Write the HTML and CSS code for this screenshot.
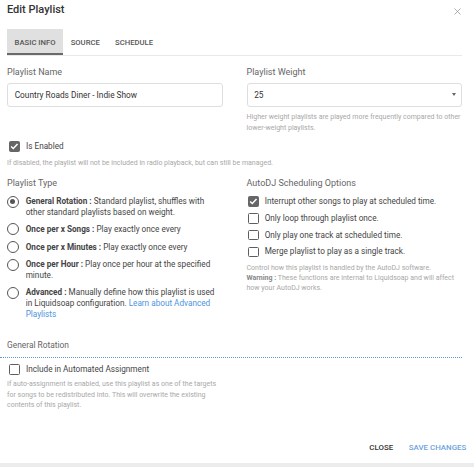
FILE: index.html
```html
<!DOCTYPE html>
<html>
<head>
<meta charset="utf-8">
<link rel="stylesheet" href="styles.css">
</head>
<body>
<div class="dialog">
  <div class="header">
    <div class="title">Edit Playlist</div>
    <svg class="close" width="7" height="7" viewBox="0 0 7 7"><path d="M0.5 0.5L6.5 6.5M6.5 0.5L0.5 6.5" stroke="#999" stroke-width="0.8" fill="none"/></svg>
  </div>
  <div class="tabs">
    <div class="tab active">BASIC INFO</div>
    <div class="tab">SOURCE</div>
    <div class="tab">SCHEDULE</div>
  </div>

  <div class="grid2 row1">
    <div>
      <div class="field-label">Playlist Name</div>
      <div class="input">Country Roads Diner - Indie Show</div>
    </div>
    <div>
      <div class="field-label">Playlist Weight</div>
      <div class="input select"><span>25</span><span class="caret"></span></div>
      <div class="help help-weight">Higher weight playlists are played more frequently compared to other lower-weight playlists.</div>
    </div>
  </div>

  <div class="check-row enabled-row">
    <span class="cb checked"><svg viewBox="0 0 10 10"><path d="M2 5.2L4.1 7.2L8.1 2.9" stroke="#fff" stroke-width="1.4" fill="none"/></svg></span>
    <span class="cb-label">Is Enabled</span>
  </div>
  <div class="help help-enabled">If disabled, the playlist will not be included in radio playback, but can still be managed.</div>

  <div class="grid2 row3">
    <div>
      <div class="field-label">Playlist Type</div>
      <div class="radio-list">
        <div class="radio-item"><span class="radio selected"></span><span class="radio-text"><b>General Rotation :</b> Standard playlist, shuffles with other standard playlists based on weight.</span></div>
        <div class="radio-item"><span class="radio"></span><span class="radio-text"><b>Once per x Songs :</b> Play exactly once every</span></div>
        <div class="radio-item"><span class="radio"></span><span class="radio-text"><b>Once per x Minutes :</b> Play exactly once every</span></div>
        <div class="radio-item"><span class="radio"></span><span class="radio-text"><b>Once per Hour :</b> Play once per hour at the specified minute.</span></div>
        <div class="radio-item"><span class="radio"></span><span class="radio-text"><b>Advanced :</b> Manually define how this playlist is used in Liquidsoap configuration. <span class="link">Learn about Advanced Playlists</span></span></div>
      </div>
    </div>
    <div>
      <div class="field-label">AutoDJ Scheduling Options</div>
      <div class="check-list">
        <div class="check-item"><span class="cb checked"><svg viewBox="0 0 10 10"><path d="M2 5.2L4.1 7.2L8.1 2.9" stroke="#fff" stroke-width="1.4" fill="none"/></svg></span><span class="cb-label">Interrupt other songs to play at scheduled time.</span></div>
        <div class="check-item"><span class="cb"></span><span class="cb-label">Only loop through playlist once.</span></div>
        <div class="check-item"><span class="cb"></span><span class="cb-label">Only play one track at scheduled time.</span></div>
        <div class="check-item"><span class="cb"></span><span class="cb-label">Merge playlist to play as a single track.</span></div>
      </div>
      <div class="help help-autodj">Control how this playlist is handled by the AutoDJ software.<br><b>Warning :</b> These functions are internal to Liquidsoap and will affect how your AutoDJ works.</div>
    </div>
  </div>

  <div class="section-title">General Rotation</div>
  <div class="check-row include-row">
    <span class="cb"></span>
    <span class="cb-label">Include in Automated Assignment</span>
  </div>
  <div class="grid2">
    <div class="help help-include">If auto-assignment is enabled, use this playlist as one of the targets for songs to be redistributed into. This will overwrite the existing contents of this playlist.</div>
  </div>

  <div class="footer">
    <span class="btn btn-close">CLOSE</span>
    <span class="btn btn-save">SAVE CHANGES</span>
  </div>
</div>
</body>
</html>
```
FILE: styles.css
```css
* { box-sizing: border-box; }
html, body { margin: 0; padding: 0; }
body {
  background: #ececec;
  font-family: Roboto, "Noto Sans", sans-serif;
  color: #444;
}
.dialog {
  background: #fff;
  height: 463px;
  display: flex;
  flex-direction: column;
  padding: 0 12px 0 7px;
}
.header {
  height: 20px;
  display: flex;
  justify-content: space-between;
  align-items: center;
}
.title {
  font-size: 11px;
  line-height: 14px;
  font-weight: 500;
  color: #333;
}
.close { margin-top: 3px; margin-right: 1px; }
.tabs {
  display: flex;
  margin-top: 9px;
  border-bottom: 1px solid #e9e9e9;
}
.tab {
  height: 26px;
  padding: 0 7.6px;
  font-size: 7.7px;
  font-weight: 500;
  color: #555;
  display: flex;
  align-items: center;
}
.tab.active {
  background: #e0e0e0;
  border-bottom: 2px solid #6a6a6a;
  padding-top: 2px;
}
.grid2 {
  display: grid;
  grid-template-columns: 1fr 1fr;
  column-gap: 24px;
}
.row1 { margin-top: 10.5px; }
.field-label {
  font-size: 9px;
  line-height: 11px;
  color: #666;
}
.row1 .field-label { margin-bottom: 5.8px; }
.input {
  height: 23.4px;
  border: 1px solid #dedede;
  border-radius: 3px;
  padding: 0 6.7px;
  font-size: 8.3px;
  color: #333;
  display: flex;
  align-items: center;
}
.select { justify-content: space-between; padding-right: 5px; }
.caret {
  width: 0; height: 0;
  border-left: 2.5px solid transparent;
  border-right: 2.5px solid transparent;
  border-top: 3px solid #666;
}
.help {
  font-size: 7px;
  color: #a8a8a8;
}
.help b { color: #888; font-weight: 700; }
.help-weight { margin-top: 5.3px; line-height: 11.3px; }
.check-row {
  display: flex;
  align-items: center;
  height: 14px;
}
.enabled-row { margin-top: 5px; }
.cb {
  width: 10.5px;
  height: 10.5px;
  border: 1.4px solid #5e5e5e;
  border-radius: 1.5px;
  flex: none;
  margin-left: 2px;
  margin-right: 6.5px;
  display: inline-block;
}
.cb.checked {
  background: #666;
  border-color: #666;
  position: relative;
}
.cb.checked svg {
  position: absolute;
  left: -1.4px; top: -1.4px;
  width: 10.5px; height: 10.5px;
}
.cb-label {
  font-size: 8.2px;
  line-height: 10.7px;
  color: #444;
}
.help-enabled { margin-top: 4.5px; line-height: 10.3px; }
.row3 { margin-top: 9.5px; }
.radio-list, .check-list {
  display: flex;
  flex-direction: column;
  margin-top: 7.5px;
}
.radio-list { gap: 6.3px; }
.check-list { gap: 6px; }
.radio-item { display: flex; align-items: flex-start; }
.radio {
  width: 12px;
  height: 12px;
  border: 1.4px solid #555;
  border-radius: 50%;
  flex: none;
  margin-top: -0.6px;
  margin-right: 6.7px;
  position: relative;
}
.radio.selected::after {
  content: "";
  position: absolute;
  left: 1.9px; top: 1.9px;
  width: 5.4px; height: 5.4px;
  border-radius: 50%;
  background: #555;
}
.radio-text {
  font-size: 8.2px;
  line-height: 10.7px;
  color: #444;
}
.radio-text b { font-weight: 700; color: #444; }
.link { color: #4d94e0; }
.check-item { display: flex; align-items: center; }
.check-item .cb { margin-left: 1.7px; margin-right: 6px; }
.help-autodj { margin-top: 6.8px; line-height: 9.8px; }
.section-title {
  margin-top: 21px;
  margin-left: -7px;
  padding-left: 7px;
  font-size: 8.4px;
  font-weight: 400;
  line-height: 10px;
  color: #666;
  padding-bottom: 7px;
  border-bottom: 1px dotted #5c9ad6;
}
.include-row { margin-top: 4px; }
.help-include { margin-top: 2.6px; line-height: 10.8px; }
.footer {
  margin-top: auto;
  display: flex;
  justify-content: flex-end;
  align-items: center;
  gap: 15.7px;
  height: 20px;
  margin-bottom: 4.6px;
  margin-right: -4.3px;
}
.btn {
  font-size: 7.9px;
  font-weight: 500;
  line-height: 10px;
}
.btn-close { color: #333; }
.btn-save { color: #6ea3dd; }
```
